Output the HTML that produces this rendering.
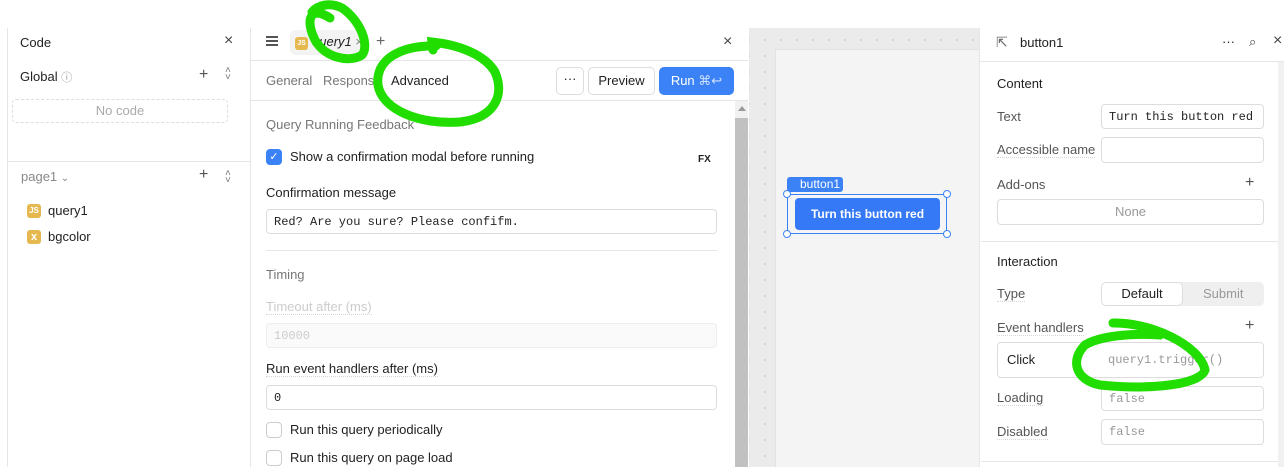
<!DOCTYPE html>
<html><head><meta charset="utf-8"><style>
*{box-sizing:border-box;margin:0;padding:0}
body{width:1284px;height:467px;overflow:hidden;background:#fff;font-family:"Liberation Sans",sans-serif;font-size:13px;color:#222;position:relative}
.a{position:absolute}
.mono{font-family:"Liberation Mono",monospace;font-size:12px}
.inp{position:absolute;border:1px solid #ddd;border-radius:4px;background:#fff}
.lbl{position:absolute;color:#555;font-size:13px}
.dash{border-bottom:1px dotted #d6d6d6}
.cb{position:absolute;width:16px;height:16px;border:1px solid #ccc;border-radius:4px;background:#fff}
</style></head><body>
<div class="a" style="left:7px;top:28px;width:1px;height:439px;background:#e6e6e6"></div>
<div class="a" style="left:250px;top:28px;width:1px;height:439px;background:#e6e6e6"></div>
<div class="a" style="left:20px;top:35px;font-size:13px">Code</div>
<div class="a" style="left:224px;top:32px;font-size:16px;color:#444">×</div>
<div class="a" style="left:20px;top:69px">Global <span style="color:#999;font-size:11px">ⓘ</span></div>
<div class="a" style="left:199px;top:66px;font-size:16px;color:#555">+</div>
<div class="a" style="left:225px;top:67px;font-size:10px;color:#777;line-height:7px">˄<br>˅</div>
<div class="a" style="left:12px;top:99px;width:216px;height:24px;border:1px dashed #ddd;border-radius:4px;text-align:center;line-height:22px;color:#aaa">No code</div>
<div class="a" style="left:8px;top:161px;width:242px;height:1px;background:#e6e6e6"></div>
<div class="a" style="left:21px;top:169px;color:#888">page1 <span style="font-size:10px">⌄</span></div>
<div class="a" style="left:199px;top:166px;font-size:16px;color:#555">+</div>
<div class="a" style="left:225px;top:170px;font-size:10px;color:#777;line-height:7px">˄<br>˅</div>
<div class="a" style="left:27px;top:204px;width:14px;height:14px;background:#e5b94f;border-radius:3px;color:#fff;font-size:8px;font-weight:bold;text-align:center;line-height:14px">JS</div>
<div class="a" style="left:48px;top:203px">query1</div>
<div class="a" style="left:27px;top:230px;width:14px;height:14px;background:#e5b94f;border-radius:3px;color:#fff;font-size:11px;font-weight:bold;text-align:center;line-height:14px">x</div>
<div class="a" style="left:48px;top:229px">bgcolor</div>
<div class="a" style="left:266px;top:36px;width:12px;height:2px;background:#555;box-shadow:0 4px 0 #555,0 8px 0 #555"></div>
<div class="a" style="left:290px;top:30px;width:75px;height:25px;background:#f3f3f3;border-radius:5px"></div>
<div class="a" style="left:295px;top:37px;width:13px;height:13px;background:#e5b94f;border-radius:3px;color:#fff;font-size:7px;font-weight:bold;text-align:center;line-height:13px">JS</div>
<div class="a" style="left:312px;top:34px;font-style:italic">query1 <span style="color:#888;font-style:normal">×</span></div>
<div class="a" style="left:376px;top:33px;font-size:16px;color:#666">+</div>
<div class="a" style="left:723px;top:33px;font-size:16px;color:#444">×</div>
<div class="a" style="left:251px;top:60px;width:497px;height:1px;background:#e6e6e6"></div>
<div class="a" style="left:266px;top:73px;color:#777">General</div>
<div class="a" style="left:323px;top:73px;color:#777">Response</div>
<div class="a" style="left:391px;top:73px;color:#222">Advanced</div>
<div class="a" style="left:556px;top:67px;width:28px;height:28px;border:1px solid #ddd;border-radius:5px;text-align:center;line-height:22px">···</div>
<div class="a" style="left:588px;top:67px;width:67px;height:28px;border:1px solid #ddd;border-radius:5px;text-align:center;line-height:26px">Preview</div>
<div class="a" style="left:659px;top:67px;width:75px;height:28px;background:#3b82f6;border-radius:5px;color:#fff;text-align:center;line-height:28px">Run <span style="opacity:.75">⌘↩</span></div>
<div class="a" style="left:251px;top:100px;width:497px;height:1px;background:#e6e6e6"></div>
<div class="a" style="left:735px;top:101px;width:13px;height:366px;background:#f1f1f1"></div>
<div class="a" style="left:738px;top:106px;width:0;height:0;border:4px solid transparent;border-bottom:5px solid #999;border-top:0"></div>
<div class="a" style="left:735px;top:118px;width:13px;height:349px;background:#c1c1c1"></div>
<div class="a" style="left:266px;top:117px;color:#777">Query Running Feedback</div>
<div class="a" style="left:266px;top:149px;width:16px;height:16px;background:#3b82f6;border-radius:4px;color:#fff;font-size:11px;text-align:center;line-height:16px">✓</div>
<div class="a" style="left:290px;top:149px">Show a confirmation modal before running</div>
<div class="a" style="left:698px;top:154px;font-size:10px;font-weight:bold">FX</div>
<div class="a" style="left:266px;top:185px">Confirmation message</div>
<div class="inp" style="left:266px;top:209px;width:451px;height:25px"><span class="mono a" style="left:7px;top:5px">Red? Are you sure? Please confifm.</span></div>
<div class="a" style="left:266px;top:250px;width:451px;height:1px;background:#e6e6e6"></div>
<div class="a" style="left:266px;top:267px;color:#777">Timing</div>
<div class="a dash" style="left:266px;top:299px;color:#ccc">Timeout after (ms)</div>
<div class="inp" style="left:266px;top:323px;width:451px;height:25px;background:#fafafa;border-color:#eee"><span class="mono a" style="left:7px;top:5px;color:#ccc">10000</span></div>
<div class="a dash" style="left:266px;top:361px">Run event handlers after (ms)</div>
<div class="inp" style="left:266px;top:385px;width:451px;height:25px"><span class="mono a" style="left:7px;top:5px">0</span></div>
<div class="cb" style="left:266px;top:422px"></div>
<div class="a" style="left:290px;top:422px">Run this query periodically</div>
<div class="cb" style="left:266px;top:450px"></div>
<div class="a" style="left:290px;top:450px">Run this query on page load</div>
<div class="a" style="left:749px;top:28px;width:230px;height:439px;background-color:#ebebeb;background-image:radial-gradient(#d4d4d4 1px,transparent 1.2px);background-size:16px 16px;background-position:8px 4px"></div>
<div class="a" style="left:775px;top:49px;width:204px;height:418px;background:#f4f4f4;border-left:1px solid #e2e2e2;border-top:1px solid #e2e2e2"></div>
<div class="a" style="left:787px;top:177px;width:56px;height:15px;background:#3b82f6;border-radius:3px;color:#fff;font-size:12px;line-height:15px;padding-left:13px">button1</div>
<div class="a" style="left:787px;top:194px;width:160px;height:40px;border:1px solid #3b82f6"></div>
<div class="a" style="left:795px;top:198px;width:145px;height:32px;background:#3579f6;border-radius:4px;color:#fff;font-weight:bold;font-size:12px;text-align:center;line-height:32px">Turn this button red</div>
<div class="a" style="left:783px;top:190px;width:8px;height:8px;border:1px solid #3b82f6;border-radius:50%;background:#fff"></div>
<div class="a" style="left:943px;top:190px;width:8px;height:8px;border:1px solid #3b82f6;border-radius:50%;background:#fff"></div>
<div class="a" style="left:783px;top:230px;width:8px;height:8px;border:1px solid #3b82f6;border-radius:50%;background:#fff"></div>
<div class="a" style="left:943px;top:230px;width:8px;height:8px;border:1px solid #3b82f6;border-radius:50%;background:#fff"></div>
<div class="a" style="left:979px;top:28px;width:1px;height:439px;background:#e6e6e6"></div>
<div class="a" style="left:996px;top:34px;font-size:14px;color:#666">⇱</div>
<div class="a" style="left:1020px;top:35px">button1</div>
<div class="a" style="left:1222px;top:34px">···</div>
<div class="a" style="left:1249px;top:34px;color:#444">⌕</div>
<div class="a" style="left:1273px;top:32px;font-size:16px;color:#444">×</div>
<div class="a" style="left:980px;top:61px;width:304px;height:1px;background:#e6e6e6"></div>
<div class="a" style="left:1278px;top:62px;width:6px;height:405px;background:#f1f1f1"></div>
<div class="a" style="left:997px;top:76px">Content</div>
<div class="lbl" style="left:997px;top:109px">Text</div>
<div class="inp" style="left:1101px;top:104px;width:163px;height:25px"><span class="mono a" style="left:7px;top:5px;color:#222">Turn this button red</span></div>
<div class="lbl dash" style="left:997px;top:142px">Accessible name</div>
<div class="inp" style="left:1101px;top:137px;width:163px;height:26px"></div>
<div class="lbl" style="left:997px;top:177px">Add-ons</div>
<div class="a" style="left:1245px;top:174px;font-size:16px;color:#555">+</div>
<div class="inp" style="left:997px;top:199px;width:267px;height:26px;text-align:center;line-height:24px;color:#999">None</div>
<div class="a" style="left:981px;top:241px;width:297px;height:1px;background:#e6e6e6"></div>
<div class="a" style="left:997px;top:254px">Interaction</div>
<div class="lbl dash" style="left:997px;top:286px">Type</div>
<div class="a" style="left:1101px;top:282px;width:163px;height:24px;background:#efefef;border-radius:5px"></div>
<div class="a" style="left:1101px;top:282px;width:82px;height:24px;background:#fff;border:1px solid #ddd;border-radius:5px;text-align:center;line-height:22px">Default</div>
<div class="a" style="left:1203px;top:286px;color:#999">Submit</div>
<div class="lbl dash" style="left:997px;top:320px">Event handlers</div>
<div class="a" style="left:1245px;top:317px;font-size:16px;color:#555">+</div>
<div class="inp" style="left:997px;top:342px;width:267px;height:36px"><span class="a" style="left:9px;top:9px">Click</span><span class="mono a" style="left:110px;top:10px;color:#999">query1.trigger()</span></div>
<div class="lbl dash" style="left:997px;top:390px">Loading</div>
<div class="inp" style="left:1101px;top:386px;width:163px;height:25px"><span class="mono a" style="left:7px;top:5px;color:#999">false</span></div>
<div class="lbl dash" style="left:997px;top:424px">Disabled</div>
<div class="inp" style="left:1101px;top:419px;width:163px;height:26px"><span class="mono a" style="left:7px;top:5px;color:#999">false</span></div>
<div class="a" style="left:981px;top:461px;width:297px;height:1px;background:#e6e6e6"></div>
<svg class="a" style="left:0;top:0" width="1284" height="467" fill="none" stroke="#22dd00" stroke-width="9" stroke-linecap="round">
<path d="M330 18 C310 5 305 20 315 40 C325 58 350 63 362 55 C370 45 360 20 342 8 C330 2 318 5 312 12"/>
<path d="M436 46 C400 45 375 60 378 85 C382 110 420 125 460 122 C495 118 505 95 495 72 C485 55 460 45 432 42 L433 50"/>
<path d="M1113 323 C1150 322 1200 345 1205 370 C1200 385 1150 390 1100 385 C1075 380 1070 360 1085 345 C1100 336 1130 333 1160 335"/>
</svg>
</body></html>
